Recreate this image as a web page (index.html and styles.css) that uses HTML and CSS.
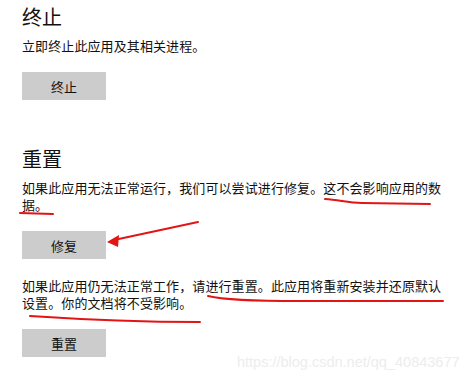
FILE: index.html
```html
<!DOCTYPE html>
<html>
  <head>
    <meta charset="utf-8">
    <title>应用设置</title>
    <link rel="stylesheet" href="styles.css">
  </head>
  <body>
    <div class="page">
      <h2 class="title">终止</h2>
      <p class="desc">立即终止此应用及其相关进程。</p>
      <button class="btn">终止</button>

      <h2 class="title title-gap">重置</h2>
      <p class="desc">如果此应用无法正常运行，我们可以尝试进行修复。这不会影响应用的数据。</p>
      <button class="btn">修复</button>

      <p class="desc desc-gap">如果此应用仍无法正常工作，请进行重置。此应用将重新安装并还原默认设置。你的文档将不受影响。</p>
      <button class="btn">重置</button>
    </div>

    <!-- red marks drawn over the screenshot -->
    <svg class="marks" width="474" height="387" viewBox="0 0 474 387">
      <g fill="none" stroke="#e31414" stroke-width="2" stroke-linecap="round">
        <path d="M325 199 C340 200 348 203 362 203 L430 204"/>
        <path d="M20 213 L53 214"/>
        <path d="M198 222 L114 240"/>
        <path d="M208 296 C225 300 250 301 300 301 L443 301"/>
        <path d="M30 316 C60 318 120 322 200 322"/>
      </g>
      <polygon points="107,242 119,235 118,247" fill="#e31414"/>
    </svg>
    <div class="watermark">https://blog.csdn.net/qq_40843677</div>
  </body>
</html>
```
FILE: styles.css
```css
* {
box-sizing: border-box;
}
html, body {
margin: 0;
background: #ffffff;
}
body {
position: relative;
width: 474px;
height: 387px;
overflow: hidden;
font-family: "Noto Sans CJK SC", "Noto Sans", sans-serif;
color: #111111;
}
.page {
padding: 5px 0 0 22px;
width: 448px;
}
.title {
margin: 0;
font-size: 20px;
font-weight: normal;
line-height: 24px;
}
.title-gap {
margin-top: 47px;
}
.desc {
margin: 8px 0 0 0;
width: 426px;
font-size: 13px;
letter-spacing: 0.1px;
line-height: 17px;
}
.desc-gap {
margin-top: 18px;
}
.btn {
display: block;
margin-top: 18px;
width: 84px;
height: 28px;
border: 0;
padding: 0;
background-color: #cccccc;
font-family: inherit;
font-size: 13px;
color: #111111;
}
.marks {
position: absolute;
top: 0;
left: 0;
}
.watermark {
position: absolute;
left: 237px;
top: 354px;
font-family: "Liberation Sans", Arial, sans-serif;
font-size: 14.5px;
color: #ededed;
}
```
